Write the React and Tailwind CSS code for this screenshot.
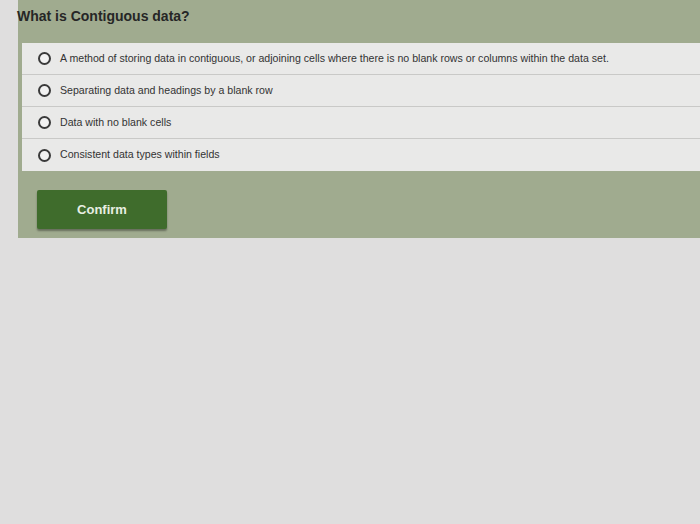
const options = [
  "A method of storing data in contiguous, or adjoining cells where there is no blank rows or columns within the data set.",
  "Separating data and headings by a blank row",
  "Data with no blank cells",
  "Consistent data types within fields"
];

export default function App() {
  return (
    <div className="h-[524px] w-[700px] overflow-hidden bg-[#dfdede] font-['Liberation_Sans',Arial,sans-serif]">
      <div className="ml-[18px] bg-[#a0ab8f] pb-[8px]">
        <h1 className="-ml-[1px] pt-[7px] text-[14px] font-bold leading-[18px] text-[#262626]">
          What is Contiguous data?
        </h1>

        <div className="ml-[4px] mt-[18px] flex flex-col bg-[#e9e9e8]">
          {options.map((text, i) => (
            <label
              key={i}
              className={`flex h-[32px] items-center gap-[9px] pl-[16px] ${
                i < options.length - 1 ? "border-b border-[#c9c9c7]" : ""
              }`}
            >
              <span className="h-[13px] w-[13px] shrink-0 rounded-full border-[2px] border-[#3a3a3a] bg-[#f2f2f2]" />
              <span className="whitespace-nowrap text-[10.6px] text-[#333333]">{text}</span>
            </label>
          ))}
        </div>

        <div className="pb-[1px] pl-[19px] pt-[19px]">
          <button
            type="button"
            className="h-[39px] w-[130px] rounded-[2px] bg-[#3f6c2c] text-[13px] font-bold text-[#e8efe2] shadow-[0_2px_2px_rgba(0,0,0,0.35)]"
          >
            Confirm
          </button>
        </div>
      </div>
    </div>
  );
}
